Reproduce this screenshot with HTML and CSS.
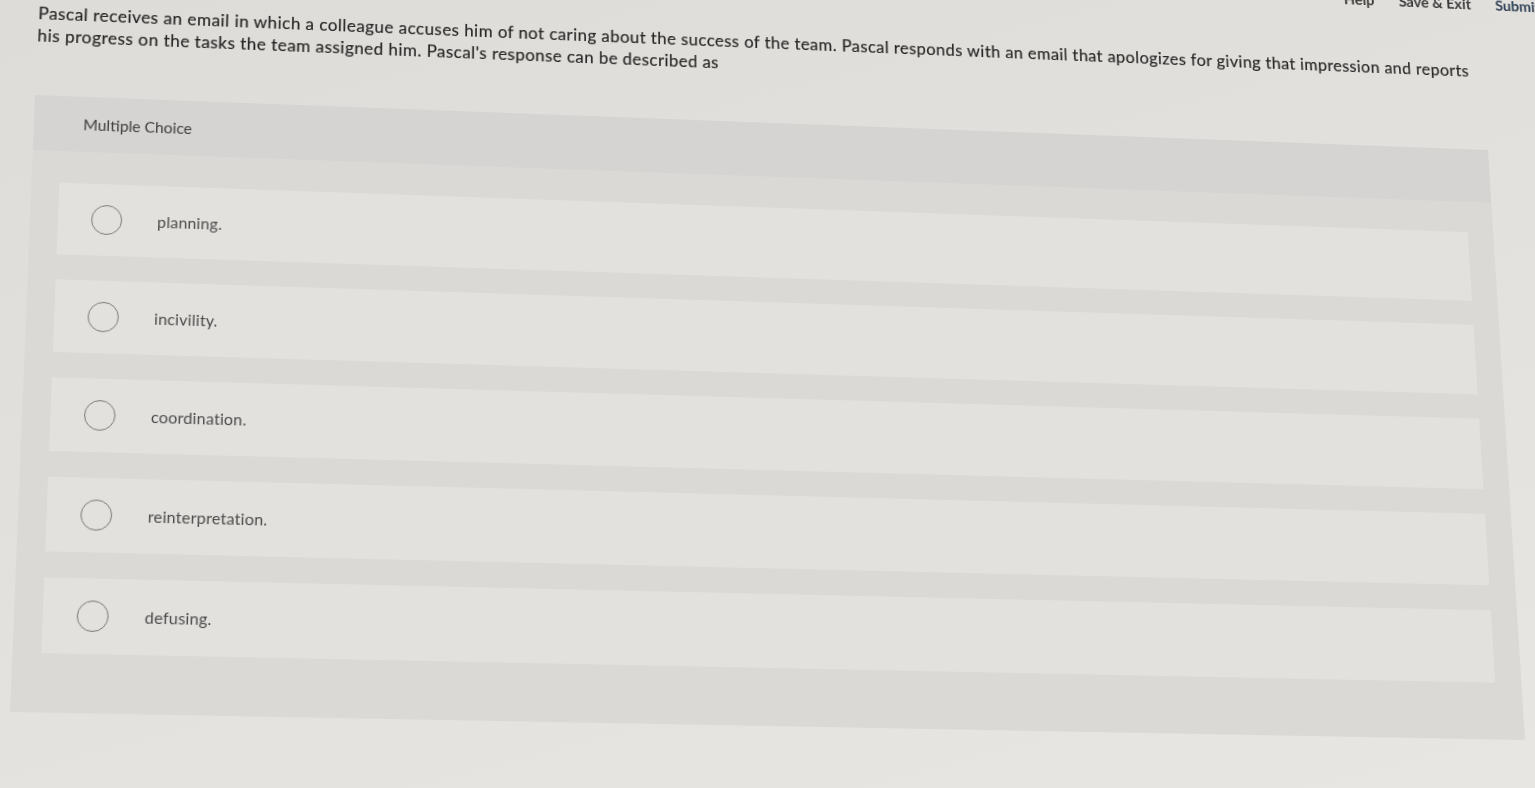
FILE: index.html
```html
<!DOCTYPE html>
<html lang="en">
<head>
<meta charset="utf-8">
<title>Multiple Choice</title>
<link rel="stylesheet" href="styles.css">
</head>
<body>
<div class="screen">
  <header class="toolbar">
    <span class="tool">Help</span>
    <span class="tool">Save &amp; Exit</span>
    <span class="tool tool-submit">Submit</span>
  </header>
  <main class="question">
    <p class="prompt">Pascal receives an email in which a colleague accuses him of not caring about the success of the team. Pascal responds with an email that apologizes for giving that impression and reports his progress on the tasks the team assigned him. Pascal's response can be described as</p>
    <section class="mc">
      <div class="mc-head">Multiple Choice</div>
      <div class="mc-options">
        <label class="opt"><span class="radio"></span><span class="opt-text">planning.</span></label>
        <label class="opt"><span class="radio"></span><span class="opt-text">incivility.</span></label>
        <label class="opt"><span class="radio"></span><span class="opt-text">coordination.</span></label>
        <label class="opt"><span class="radio"></span><span class="opt-text">reinterpretation.</span></label>
        <label class="opt"><span class="radio"></span><span class="opt-text">defusing.</span></label>
      </div>
    </section>
  </main>
</div>
</body>
</html>
```
FILE: styles.css
```css
html, body {
  margin: 0;
  padding: 0;
  height: 100%;
  overflow: hidden;
}
body {
  background: linear-gradient(165deg, #dedcd8 0%, #e3e1dd 50%, #e8e6e2 100%);
  font-family: Lato, "Open Sans", "Liberation Sans", sans-serif;
}
.screen {
  width: 1640px;
  height: 900px;
  transform-origin: 0 0;
  transform: matrix3d(1.029777, 0.042003, 0, 0.00003227, -0.042086, 0.971904, 0, -0.00006969, 0, 0, 1, 0, 5.0826, -71.7358, 0, 1.0106849);
}
.toolbar {
  height: 23px;
  display: flex;
  justify-content: flex-end;
  align-items: flex-end;
  gap: 26px;
  padding-right: 58px;
}
.tool {
  font-size: 15.5px;
  font-weight: 700;
  color: #3a3a3a;
  line-height: 20px;
}
.tool-submit {
  color: #2f4257;
}
.question {
  padding-left: 36px;
}
.prompt {
  margin: 52px 0 0 0;
  width: 1484px;
  font-size: 17px;
  letter-spacing: 0.45px;
  line-height: 22.5px;
  color: #242424;
  -webkit-text-stroke: 0.15px #242424;
}
.mc {
  margin-top: 50px;
  width: 1480px;
  height: 604px;
  background: #dad9d6;
}
.mc-head {
  height: 56px;
  line-height: 56px;
  padding-left: 48px;
  font-size: 15.3px;
  color: #3e3e3e;
  background: #d5d4d2;
}
.mc-options {
  margin-top: 31.6px;
  padding: 0 27px;
  display: flex;
  flex-direction: column;
  gap: 25.2px;
}
.opt {
  height: 72px;
  display: flex;
  align-items: center;
  padding-left: 32px;
  background: #e2e1de;
}
.radio {
  width: 30px;
  height: 30px;
  box-sizing: border-box;
  border: 1.6px solid #7c7c7c;
  border-radius: 50%;
  flex: none;
}
.opt-text {
  margin-left: 34px;
  font-size: 15.5px;
  letter-spacing: 0.2px;
  color: #4a4a4a;
}
```
